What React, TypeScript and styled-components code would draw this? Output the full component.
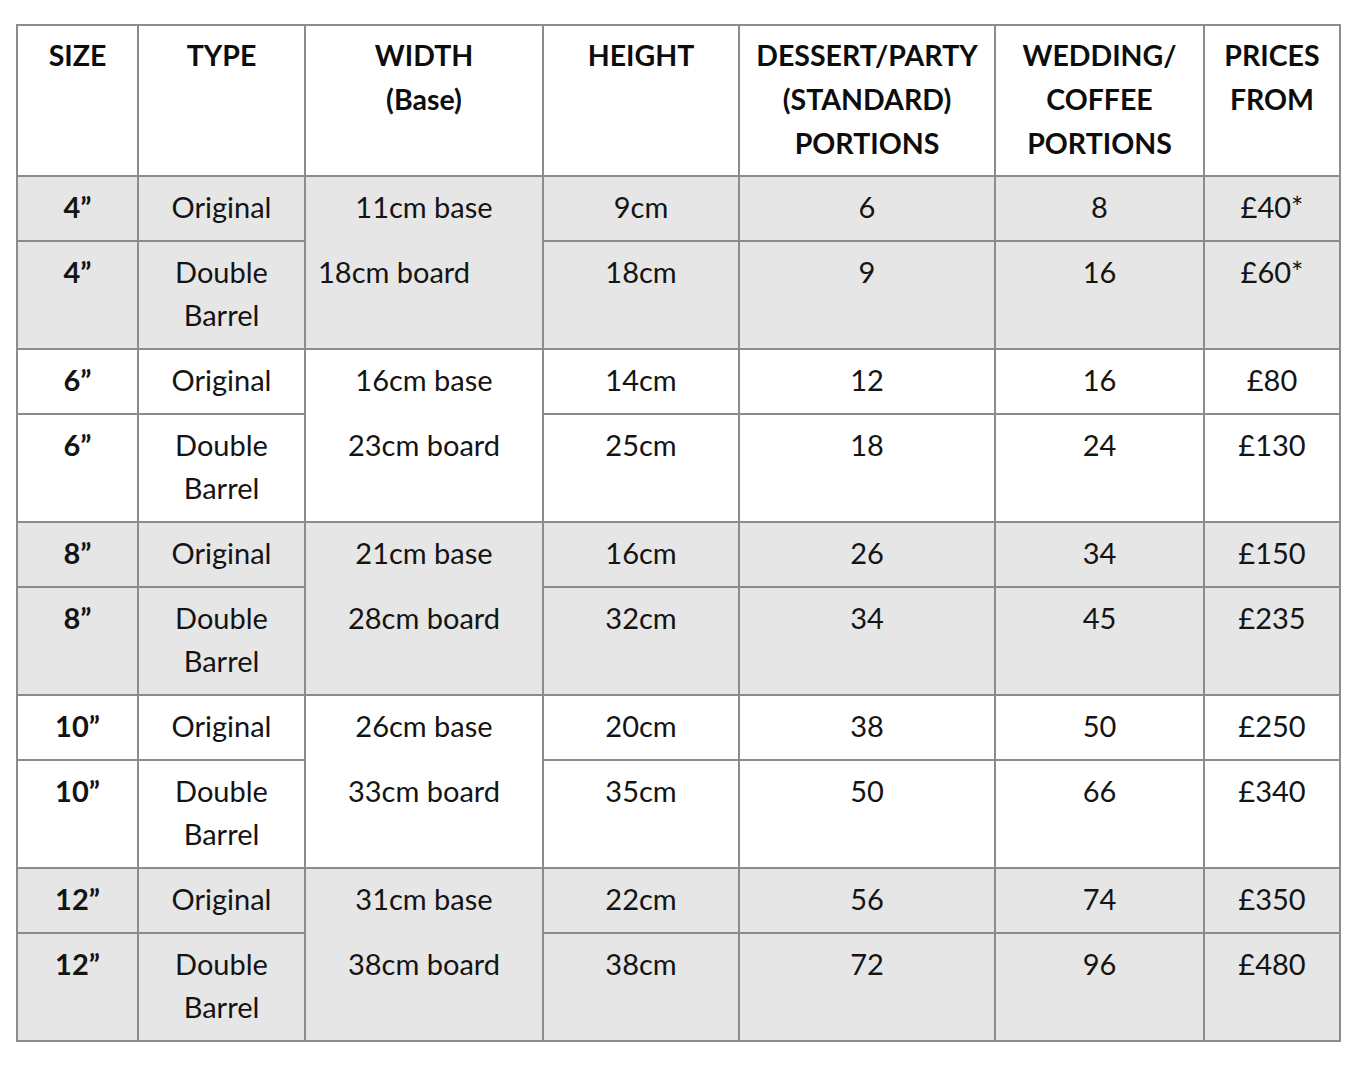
import { type FC } from "react";
import styled, { createGlobalStyle } from "styled-components";

const GlobalStyle = createGlobalStyle`
    html, body {
        margin: 0;
        padding: 0;
        background: #ffffff;
    }
    body {
        font-family: "Lato", "Noto Sans", sans-serif;
        color: #141414;
    }
`;

interface ICakeRow {
    size: string;
    type: string[];
    height: string;
    dessert: string;
    wedding: string;
    price: string;
}

interface ICakeGroup {
    base: string;
    board: string;
    boardLeft?: boolean;
    rows: [ICakeRow, ICakeRow];
}

const headings: { label: string[]; width: number }[] = [
    { label: ["SIZE"], width: 121 },
    { label: ["TYPE"], width: 167 },
    { label: ["WIDTH", "(Base)"], width: 238 },
    { label: ["HEIGHT"], width: 196 },
    { label: ["DESSERT/PARTY", "(STANDARD)", "PORTIONS"], width: 256 },
    { label: ["WEDDING/", "COFFEE", "PORTIONS"], width: 209 },
    { label: ["PRICES", "FROM"], width: 136 },
];

const groups: ICakeGroup[] = [
    {
        base: "11cm base",
        board: "18cm board",
        boardLeft: true,
        rows: [
            { size: "4”", type: ["Original"], height: "9cm", dessert: "6", wedding: "8", price: "£40*" },
            { size: "4”", type: ["Double", "Barrel"], height: "18cm", dessert: "9", wedding: "16", price: "£60*" },
        ],
    },
    {
        base: "16cm base",
        board: "23cm board",
        rows: [
            { size: "6”", type: ["Original"], height: "14cm", dessert: "12", wedding: "16", price: "£80" },
            { size: "6”", type: ["Double", "Barrel"], height: "25cm", dessert: "18", wedding: "24", price: "£130" },
        ],
    },
    {
        base: "21cm base",
        board: "28cm board",
        rows: [
            { size: "8”", type: ["Original"], height: "16cm", dessert: "26", wedding: "34", price: "£150" },
            { size: "8”", type: ["Double", "Barrel"], height: "32cm", dessert: "34", wedding: "45", price: "£235" },
        ],
    },
    {
        base: "26cm base",
        board: "33cm board",
        rows: [
            { size: "10”", type: ["Original"], height: "20cm", dessert: "38", wedding: "50", price: "£250" },
            { size: "10”", type: ["Double", "Barrel"], height: "35cm", dessert: "50", wedding: "66", price: "£340" },
        ],
    },
    {
        base: "31cm base",
        board: "38cm board",
        rows: [
            { size: "12”", type: ["Original"], height: "22cm", dessert: "56", wedding: "74", price: "£350" },
            { size: "12”", type: ["Double", "Barrel"], height: "38cm", dessert: "72", wedding: "96", price: "£480" },
        ],
    },
];

const Lines: FC<{ lines: string[] }> = ({ lines }) => (
    <>
        {lines.map((line, i) => (
            <Line key={i}>{line}</Line>
        ))}
    </>
);

const App: FC = () => {
    return (
        <Page>
            <GlobalStyle />
            <PriceTable>
                <colgroup>
                    {headings.map((h, i) => (
                        <col key={i} style={{ width: h.width }} />
                    ))}
                </colgroup>
                <thead>
                    <HeadRow>
                        {headings.map((h, i) => (
                            <HeadCell key={i}>
                                <Lines lines={h.label} />
                            </HeadCell>
                        ))}
                    </HeadRow>
                </thead>
                <tbody>
                    {groups.map((group, gi) =>
                        group.rows.map((row, ri) => (
                            <BodyRow key={`${gi}-${ri}`} $shaded={gi % 2 === 0} $tall={ri === 1}>
                                <SizeCell>{row.size}</SizeCell>
                                <Cell>
                                    <Lines lines={row.type} />
                                </Cell>
                                {ri === 0 && (
                                    <WidthCell rowSpan={2}>
                                        <Line>{group.base}</Line>
                                        <BoardLine $left={group.boardLeft}>{group.board}</BoardLine>
                                    </WidthCell>
                                )}
                                <Cell>{row.height}</Cell>
                                <Cell>{row.dessert}</Cell>
                                <Cell>{row.wedding}</Cell>
                                <Cell>{row.price}</Cell>
                            </BodyRow>
                        ))
                    )}
                </tbody>
            </PriceTable>
        </Page>
    );
};

export default App;

const Page = styled.div`
    padding: 24px 0 0 16px;
    width: 1366px;
    height: 1066px;
    box-sizing: border-box;
`;

const PriceTable = styled.table`
    border-collapse: collapse;
    table-layout: fixed;
    width: 1323px;
`;

const HeadRow = styled.tr`
    height: 151px;
`;

const HeadCell = styled.th`
    border: 2px solid #8c8c8c;
    vertical-align: top;
    text-align: center;
    padding: 7px 0 0;
    font-size: 28.5px;
    font-weight: 700;
    line-height: 44px;
    color: #0d0d0d;
`;

const BodyRow = styled.tr<{ $shaded: boolean; $tall: boolean }>`
    height: ${(p) => (p.$tall ? "108px" : "65px")};
    background: ${(p) => (p.$shaded ? "#e6e6e6" : "#ffffff")};
`;

const Cell = styled.td`
    border: 2px solid #8c8c8c;
    vertical-align: top;
    text-align: center;
    padding: 8px 0 0;
    font-size: 29px;
    font-weight: 400;
    line-height: 43px;
`;

const SizeCell = styled(Cell)`
    font-weight: 700;
`;

const WidthCell = styled(Cell)`
    padding: 8px 12px 0;
`;

const Line = styled.div`
    white-space: nowrap;
`;

const BoardLine = styled.div<{ $left?: boolean }>`
    white-space: nowrap;
    margin-top: 22px;
    text-align: ${(p) => (p.$left ? "left" : "center")};
`;
